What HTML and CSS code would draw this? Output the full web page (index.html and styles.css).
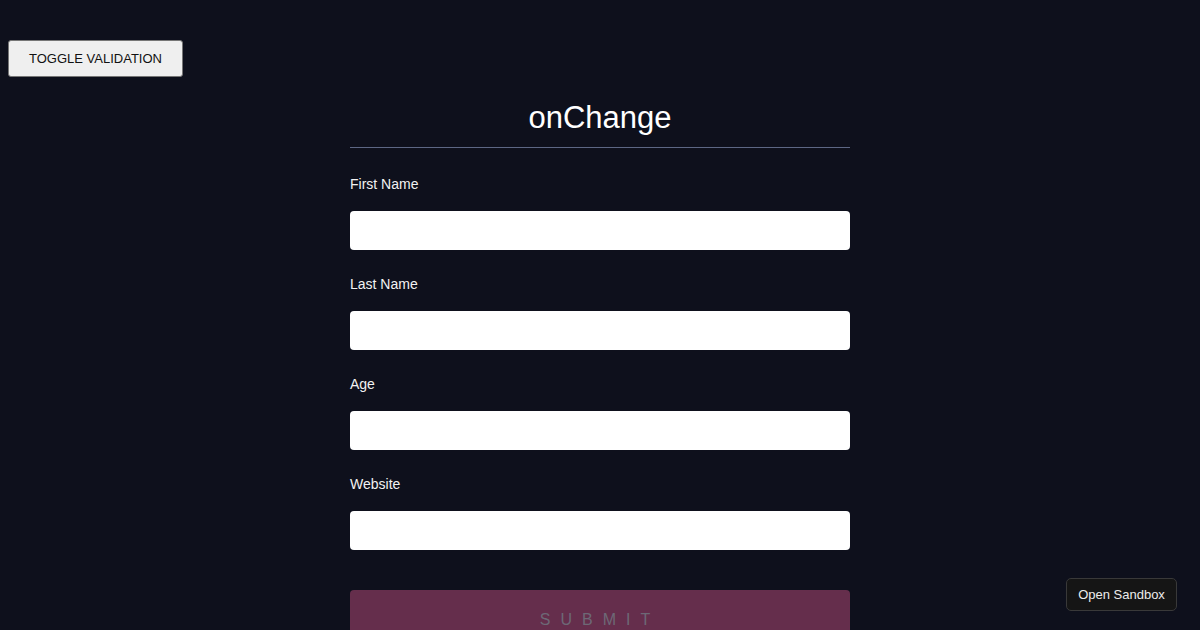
FILE: index.html
```html
<!DOCTYPE html>
<html>
<head>
<meta charset="utf-8">
<link rel="stylesheet" href="styles.css">
</head>
<body>
<div class="top">
  <button class="toggle">TOGGLE VALIDATION</button>
</div>
<form class="form">
  <h1 class="title">onChange</h1>
  <div class="rule"></div>
  <div class="fields">
    <div class="field"><label class="label">First Name</label><input class="input" type="text"></div>
    <div class="field"><label class="label">Last Name</label><input class="input" type="text"></div>
    <div class="field"><label class="label">Age</label><input class="input" type="text"></div>
    <div class="field"><label class="label">Website</label><input class="input" type="text"></div>
  </div>
  <button class="submit" type="button">Submit</button>
</form>
<button class="sandbox">Open Sandbox</button>
</body>
</html>
```

FILE: styles.css
```css
html, body {
  margin: 0;
  padding: 0;
  background: #0e101c;
  font-family: "Liberation Sans", Arial, sans-serif;
  color: #ffffff;
  overflow: hidden;
  height: 630px;
}

.top {
  padding: 40px 0 0 8px;
}

.toggle {
  display: block;
  height: 37px;
  width: 175px;
  padding: 0;
  background: #efefef;
  color: #111;
  border: 1px solid #767676;
  border-radius: 3px;
  font-family: "Liberation Sans", Arial, sans-serif;
  font-size: 13px;
}

.form {
  width: 500px;
  margin: 0 auto;
  padding-top: 23px;
}

.title {
  margin: 0;
  font-size: 31px;
  line-height: 36px;
  font-weight: 400;
  text-align: center;
  color: #fff;
}

.rule {
  height: 1px;
  background: #5d6784;
  margin-top: 11px;
}

.fields {
  display: flex;
  flex-direction: column;
  gap: 24px;
  padding-top: 26px;
}

.field {
  display: flex;
  flex-direction: column;
}

.label {
  font-size: 14px;
  line-height: 20px;
  margin-bottom: 17px;
  color: #f2f2f2;
}

.input {
  height: 39px;
  border: none;
  border-radius: 4px;
  background: #fff;
  padding: 0 10px;
  box-sizing: border-box;
}

.submit {
  display: block;
  width: 100%;
  margin-top: 40px;
  height: 60px;
  border: none;
  border-radius: 4px;
  background: #652e4c;
  color: #6d6876;
  font-family: "Liberation Sans", Arial, sans-serif;
  font-size: 16px;
  text-transform: uppercase;
  letter-spacing: 10px;
  padding: 0;
  line-height: 58px;
  text-align: center;
}

.sandbox {
  position: fixed;
  right: 23px;
  bottom: 19px;
  height: 33px;
  width: 111px;
  padding: 0;
  background: #151515;
  color: #ececec;
  border: 1px solid #393939;
  border-radius: 5px;
  font-family: "Liberation Sans", Arial, sans-serif;
  font-size: 13px;
}
```
